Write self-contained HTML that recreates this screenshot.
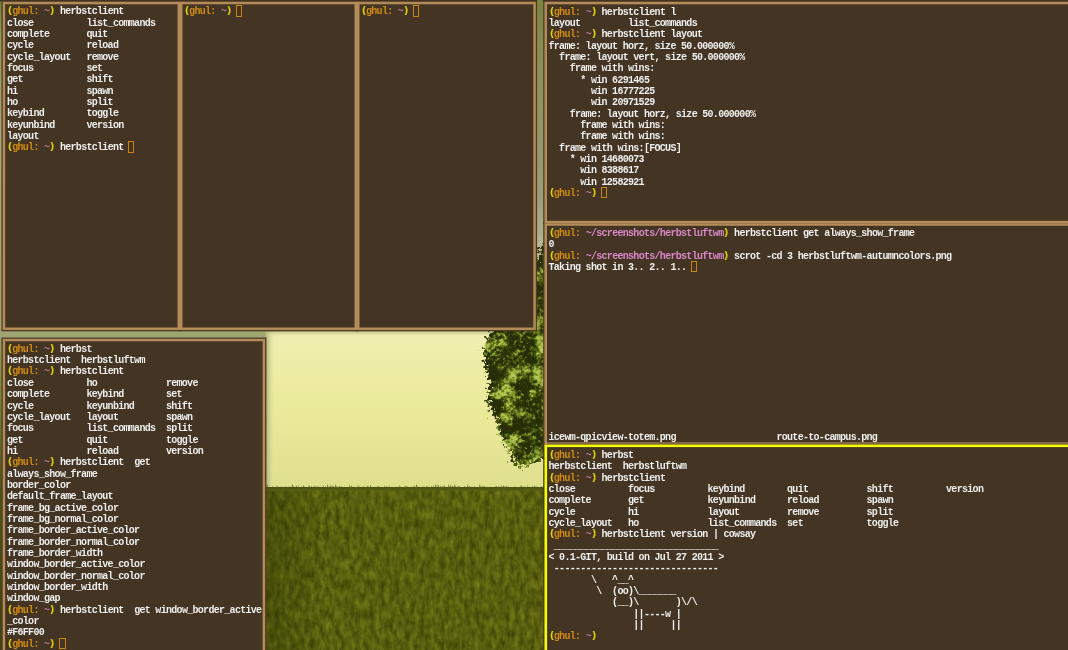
<!DOCTYPE html>
<html><head><meta charset="utf-8"><style>
html,body{margin:0;padding:0;width:1068px;height:650px;overflow:hidden;background:#433427}
svg{position:absolute;left:0;top:0}
.t{position:absolute;white-space:pre;filter:blur(0.2px);font-family:"Liberation Mono",monospace;font-weight:bold;font-size:10.00px;line-height:11px;color:#eeeeec;letter-spacing:-0.70px}
.cur{position:absolute;width:4.6px;height:9.2px;border:1.2px solid #cc8610}
.clip{position:absolute;overflow:hidden}
.pa{display:inline-block;transform:scale(0.95,0.82);transform-origin:50% 3.8px;-webkit-text-stroke:0.2px #e8d800}
</style></head><body>
<svg width="1068" height="650" viewBox="0 0 1068 650"><defs>
<linearGradient id="lstrip" x1="0" y1="0" x2="0" y2="650" gradientUnits="userSpaceOnUse">
 <stop offset="0" stop-color="#6e8236"/><stop offset="0.05" stop-color="#8c9a5a"/><stop offset="0.2" stop-color="#a5a878"/><stop offset="0.5" stop-color="#a0a470"/><stop offset="0.6" stop-color="#7a8a3a"/><stop offset="0.75" stop-color="#4a5818"/><stop offset="1" stop-color="#3a4410"/></linearGradient>
<linearGradient id="grassL" x1="0" y1="0" x2="1" y2="0">
 <stop offset="0" stop-color="#2a3000" stop-opacity="0.35"/><stop offset="1" stop-color="#2a3000" stop-opacity="0"/></linearGradient>
<linearGradient id="sky" x1="0" y1="0" x2="0" y2="1">
 <stop offset="0" stop-color="#f1efb2"/><stop offset="0.45" stop-color="#ebeb9c"/><stop offset="1" stop-color="#dfe08e"/></linearGradient>
<linearGradient id="skyshadeL" x1="0" y1="0" x2="1" y2="0">
 <stop offset="0" stop-color="#9ea573" stop-opacity="1"/><stop offset="1" stop-color="#e8e8a4" stop-opacity="0"/></linearGradient>
<linearGradient id="skyshadeT" x1="0" y1="0" x2="0" y2="1">
 <stop offset="0" stop-color="#9ea573" stop-opacity="1"/><stop offset="1" stop-color="#e8e8a4" stop-opacity="0"/></linearGradient>
<linearGradient id="grass" x1="0" y1="0" x2="0" y2="1">
 <stop offset="0" stop-color="#4a5410"/><stop offset="0.06" stop-color="#5a6218"/><stop offset="1" stop-color="#525c14"/></linearGradient>
<linearGradient id="strip" x1="0" y1="0" x2="0" y2="650" gradientUnits="userSpaceOnUse">
 <stop offset="0" stop-color="#7a8440"/><stop offset="0.1" stop-color="#8a9058"/><stop offset="0.3" stop-color="#9b9c78"/><stop offset="0.36" stop-color="#aeae8c"/>
 <stop offset="0.385" stop-color="#c0c0a0"/><stop offset="0.5" stop-color="#d8d8a0"/><stop offset="0.745" stop-color="#dfe08e"/>
 <stop offset="0.75" stop-color="#4c5a18"/><stop offset="1" stop-color="#4c5818"/></linearGradient>
<filter id="noise" color-interpolation-filters="sRGB" x="0" y="0" width="100%" height="100%"><feTurbulence type="fractalNoise" baseFrequency="0.2 0.1" numOctaves="5" seed="3"/>
 <feColorMatrix type="matrix" values="0.3 0 0 0 0.195  0.3 0 0 0 0.22  0.1 0 0 0 0.005  0 0 0 0 1"/></filter>
<filter id="leaf" color-interpolation-filters="sRGB" x="-10%" y="-10%" width="120%" height="120%">
 <feTurbulence type="fractalNoise" baseFrequency="0.06" numOctaves="2" seed="5" result="t1"/>
 <feTurbulence type="fractalNoise" baseFrequency="0.3" numOctaves="3" seed="11" result="t2"/>
 <feComposite in="t1" in2="t2" operator="arithmetic" k1="0" k2="0.75" k3="0.5" k4="-0.125" result="n0"/>
 <feColorMatrix in="n0" type="matrix" values="2.8 0 0 0 -0.72  2.8 0 0 0 -0.72  2.8 0 0 0 -0.72  0 0 0 0 1" result="n"/>
 <feComponentTransfer in="n" result="c0">
  <feFuncR type="table" tableValues="0.15 0.19 0.29 0.43 0.58 0.7"/>
  <feFuncG type="table" tableValues="0.18 0.22 0.34 0.5 0.66 0.78"/>
  <feFuncB type="table" tableValues="0.03 0.04 0.06 0.12 0.22 0.34"/>
 </feComponentTransfer>
 <feGaussianBlur in="c0" stdDeviation="0.45" result="c"/>
 <feGaussianBlur in="SourceAlpha" stdDeviation="4" result="b"/>
 <feColorMatrix in="t2" type="matrix" values="0 0 0 0 0  0 0 0 0 0  0 0 0 0 0  0 1 0 0 0" result="ta"/>
 <feComposite in="b" in2="ta" operator="arithmetic" k1="0" k2="1.2" k3="1.5" k4="-1.0" result="m"/>
 <feComponentTransfer in="m" result="m2"><feFuncA type="linear" slope="6" intercept="-1.5"/></feComponentTransfer>
 <feComposite in="c" in2="m2" operator="in"/></filter>
</defs><rect x="0" y="0" width="1068" height="650" fill="#8c9460"/><rect x="0" y="0" width="6" height="650" fill="url(#lstrip)"/><rect x="535" y="0" width="10" height="650" fill="url(#strip)"/><rect x="0" y="330" width="270" height="9" fill="#9ea573"/><rect x="265" y="330" width="280" height="158" fill="url(#sky)"/><rect x="265" y="330" width="10" height="158" fill="url(#skyshadeL)"/><rect x="265" y="330" width="280" height="7" fill="url(#skyshadeT)"/><rect x="265" y="487" width="280" height="163" fill="#000" filter="url(#noise)"/><rect x="265" y="487" width="60" height="163" fill="url(#grassL)"/><polygon points="265,491 265.6,486.5 266.7,487.8 267.3,484.0 268.7,487.8 269.3,486.5 270.0,487.8 270.6,487.0 271.9,487.8 272.5,486.0 274.6,487.8 275.2,487.0 276.2,487.8 276.8,485.0 278.0,487.8 278.6,486.5 280.7,487.8 281.3,486.0 282.3,487.8 282.9,487.0 285.0,487.8 285.6,486.0 287.6,487.8 288.2,486.5 289.1,487.8 289.7,486.0 291.5,487.8 292.1,484.0 294.4,487.8 295.0,486.0 295.8,487.8 296.4,485.0 297.6,487.8 298.2,485.5 299.7,487.8 300.3,486.5 301.3,487.8 301.9,486.0 302.7,487.8 303.3,485.0 305.4,487.8 306.0,487.0 308.2,487.8 308.8,485.0 310.7,487.8 311.3,486.0 313.4,487.8 314.0,485.0 315.0,487.8 315.6,485.5 317.2,487.8 317.8,485.5 319.3,487.8 319.9,486.5 321.0,487.8 321.6,487.0 322.4,487.8 323.0,485.5 324.7,487.8 325.3,486.0 326.8,487.8 327.4,484.0 328.9,487.8 329.5,486.0 330.3,487.8 330.9,484.0 331.9,487.8 332.5,485.5 334.7,487.8 335.3,484.0 337.1,487.8 337.7,486.0 338.6,487.8 339.2,485.5 341.1,487.8 341.7,486.0 343.5,487.8 344.1,486.5 346.3,487.8 346.9,487.0 349.0,487.8 349.6,484.0 350.6,487.8 351.2,485.0 352.9,487.8 353.5,486.5 354.4,487.8 355.0,486.5 356.1,487.8 356.7,487.0 357.4,487.8 358.0,484.0 358.7,487.8 359.3,486.0 361.2,487.8 361.8,486.0 362.5,487.8 363.1,486.0 364.2,487.8 364.8,486.5 366.8,487.8 367.4,485.5 369.6,487.8 370.2,485.0 372.0,487.8 372.6,487.0 373.7,487.8 374.3,486.5 376.5,487.8 377.1,486.0 378.0,487.8 378.6,485.5 380.3,487.8 380.9,486.5 382.1,487.8 382.7,487.0 383.9,487.8 384.5,485.5 385.4,487.8 386.0,486.0 388.4,487.8 389.0,485.0 389.8,487.8 390.4,486.5 391.8,487.8 392.4,486.5 393.2,487.8 393.8,487.0 394.5,487.8 395.1,486.5 396.7,487.8 397.3,486.5 399.0,487.8 399.6,485.0 401.1,487.8 401.7,486.5 402.9,487.8 403.5,487.0 404.3,487.8 404.9,485.0 406.0,487.8 406.6,485.5 408.4,487.8 409.0,486.5 410.5,487.8 411.1,486.5 412.5,487.8 413.1,485.5 413.7,487.8 414.3,485.5 415.7,487.8 416.3,484.0 418.5,487.8 419.1,486.5 420.6,487.8 421.2,487.0 421.9,487.8 422.5,486.0 423.5,487.8 424.1,486.5 426.1,487.8 426.7,485.5 428.9,487.8 429.5,486.5 430.7,487.8 431.3,486.0 432.9,487.8 433.5,485.0 434.8,487.8 435.4,484.0 437.2,487.8 437.8,484.0 439.7,487.8 440.3,485.5 441.6,487.8 442.2,485.5 443.2,487.8 443.8,485.0 446.0,487.8 446.6,486.5 447.8,487.8 448.4,484.0 449.9,487.8 450.5,484.0 451.6,487.8 452.2,485.5 453.8,487.8 454.4,484.0 456.4,487.8 457.0,486.0 458.2,487.8 458.8,485.5 461.2,487.8 461.8,487.0 463.9,487.8 464.5,486.0 466.8,487.8 467.4,484.0 468.4,487.8 469.0,485.5 471.2,487.8 471.8,486.5 473.8,487.8 474.4,486.0 476.2,487.8 476.8,487.0 479.0,487.8 479.6,484.0 481.3,487.8 481.9,485.0 483.3,487.8 483.9,485.5 486.2,487.8 486.8,486.5 488.9,487.8 489.5,486.5 491.7,487.8 492.3,487.0 494.0,487.8 494.6,486.0 495.4,487.8 496.0,485.5 498.2,487.8 498.8,485.0 499.5,487.8 500.1,486.5 501.0,487.8 501.6,485.0 502.8,487.8 503.4,485.0 505.4,487.8 506.0,485.5 508.2,487.8 508.8,485.5 509.5,487.8 510.1,487.0 511.9,487.8 512.5,487.0 514.0,487.8 514.6,486.0 516.3,487.8 516.9,486.5 517.6,487.8 518.2,487.0 520.2,487.8 520.8,485.0 523.0,487.8 523.6,486.0 525.7,487.8 526.3,487.0 527.0,487.8 527.6,485.0 529.1,487.8 529.7,486.5 531.7,487.8 532.3,486.0 533.6,487.8 534.2,485.5 536.3,487.8 536.9,485.5 537.7,487.8 538.3,487.0 540.5,487.8 541.1,486.0 542.7,487.8 543.3,485.5 544.6,487.8 545.2,484.0 547.2,487.8 545,491" fill="#5a6216" opacity="0.7"/><rect x="265" y="487" width="280" height="3" fill="#4a5210" opacity="0.5"/><path d="M560,241 L545,241 L540,249 L537,262 L535,280 L532,300 L524,316 L510,325 L495,329 L489,333 L486,340 L484,350 L484,362 L486,370 L489,378 L492,385 L485,392 L490,397 L487,404 L492,410 L496,418 L498,426 L500,433 L502,440 L507,447 L511,452 L513,458 L514,465 L521,468 L530,465 L538,460 L560,455 L560,240 Z" fill="#000" filter="url(#leaf)"/><rect x="0" y="0" width="537" height="1.4" fill="#3a2c1c"/><rect x="543" y="0" width="525" height="1.4" fill="#3a2c1c"/><rect x="1.40" y="0.50" width="179.90" height="330.80" fill="#4e3b26"/><rect x="178.70" y="0.50" width="179.60" height="330.80" fill="#4e3b26"/><rect x="355.70" y="0.50" width="181.40" height="330.80" fill="#4e3b26"/><rect x="1.40" y="337.50" width="265.00" height="363.80" fill="#4e3b26"/><rect x="543.20" y="0.50" width="558.10" height="224.10" fill="#4e3b26"/><rect x="543.20" y="222.00" width="558.10" height="223.80" fill="#4e3b26"/><rect x="543.20" y="443.20" width="558.10" height="258.10" fill="#4e3b26"/><rect x="2.70" y="1.80" width="177.30" height="328.20" fill="#b28b58"/><rect x="180.00" y="1.80" width="177.00" height="328.20" fill="#b28b58"/><rect x="357.00" y="1.80" width="178.80" height="328.20" fill="#b28b58"/><rect x="2.70" y="338.80" width="262.40" height="361.20" fill="#b28b58"/><rect x="544.50" y="1.80" width="555.50" height="221.50" fill="#b28b58"/><rect x="544.50" y="223.30" width="555.50" height="221.20" fill="#b28b58"/><rect x="544.50" y="444.50" width="555.50" height="255.50" fill="#f6ff00"/><rect x="5.20" y="4.30" width="172.30" height="323.20" fill="#443423"/><rect x="182.50" y="4.30" width="172.00" height="323.20" fill="#443423"/><rect x="359.50" y="4.30" width="173.80" height="323.20" fill="#443423"/><rect x="5.20" y="341.30" width="257.40" height="356.20" fill="#443423"/><rect x="547.00" y="4.30" width="550.50" height="216.50" fill="#443423"/><rect x="547.00" y="225.80" width="550.50" height="216.20" fill="#443423"/><rect x="547.10" y="447.10" width="550.30" height="250.30" fill="#443423"/><rect x="547" y="442.0" width="521" height="2.5" fill="#4e3b26" fill-opacity="0.45"/></svg>
<div class="t" style="left:6.90px;top:6.40px"><span class="pa" style="color:#e2d400">(</span><span style="color:#d08a12">ghul:</span> <span style="color:#b07898">~</span><span class="pa" style="color:#e2d400">)</span> herbstclient</div>
<div class="t" style="left:6.90px;top:17.74px">close          list_commands</div>
<div class="t" style="left:6.90px;top:29.08px">complete       quit</div>
<div class="t" style="left:6.90px;top:40.42px">cycle          reload</div>
<div class="t" style="left:6.90px;top:51.76px">cycle_layout   remove</div>
<div class="t" style="left:6.90px;top:63.10px">focus          set</div>
<div class="t" style="left:6.90px;top:74.44px">get            shift</div>
<div class="t" style="left:6.90px;top:85.78px">hi             spawn</div>
<div class="t" style="left:6.90px;top:97.12px">ho             split</div>
<div class="t" style="left:6.90px;top:108.46px">keybind        toggle</div>
<div class="t" style="left:6.90px;top:119.80px">keyunbind      version</div>
<div class="t" style="left:6.90px;top:131.14px">layout</div>
<div class="t" style="left:6.90px;top:142.48px"><span class="pa" style="color:#e2d400">(</span><span style="color:#d08a12">ghul:</span> <span style="color:#b07898">~</span><span class="pa" style="color:#e2d400">)</span> herbstclient </div>
<div class="cur" style="left:127.90px;top:141.48px"></div>
<div class="t" style="left:183.80px;top:6.40px"><span class="pa" style="color:#e2d400">(</span><span style="color:#d08a12">ghul:</span> <span style="color:#b07898">~</span><span class="pa" style="color:#e2d400">)</span> </div>
<div class="cur" style="left:235.90px;top:5.40px"></div>
<div class="t" style="left:360.70px;top:6.40px"><span class="pa" style="color:#e2d400">(</span><span style="color:#d08a12">ghul:</span> <span style="color:#b07898">~</span><span class="pa" style="color:#e2d400">)</span> </div>
<div class="cur" style="left:412.80px;top:5.40px"></div>
<div class="t" style="left:548.50px;top:6.50px"><span class="pa" style="color:#e2d400">(</span><span style="color:#d08a12">ghul:</span> <span style="color:#b07898">~</span><span class="pa" style="color:#e2d400">)</span> herbstclient l</div>
<div class="t" style="left:548.50px;top:17.84px">layout         list_commands</div>
<div class="t" style="left:548.50px;top:29.18px"><span class="pa" style="color:#e2d400">(</span><span style="color:#d08a12">ghul:</span> <span style="color:#b07898">~</span><span class="pa" style="color:#e2d400">)</span> herbstclient layout</div>
<div class="t" style="left:548.50px;top:40.52px">frame: layout horz, size 50.000000%</div>
<div class="t" style="left:548.50px;top:51.86px">  frame: layout vert, size 50.000000%</div>
<div class="t" style="left:548.50px;top:63.20px">    frame with wins:</div>
<div class="t" style="left:548.50px;top:74.54px">      * win 6291465</div>
<div class="t" style="left:548.50px;top:85.88px">        win 16777225</div>
<div class="t" style="left:548.50px;top:97.22px">        win 20971529</div>
<div class="t" style="left:548.50px;top:108.56px">    frame: layout horz, size 50.000000%</div>
<div class="t" style="left:548.50px;top:119.90px">      frame with wins:</div>
<div class="t" style="left:548.50px;top:131.24px">      frame with wins:</div>
<div class="t" style="left:548.50px;top:142.58px">  frame with wins:[FOCUS]</div>
<div class="t" style="left:548.50px;top:153.92px">    * win 14680073</div>
<div class="t" style="left:548.50px;top:165.26px">      win 8388617</div>
<div class="t" style="left:548.50px;top:176.60px">      win 12582921</div>
<div class="t" style="left:548.50px;top:187.94px"><span class="pa" style="color:#e2d400">(</span><span style="color:#d08a12">ghul:</span> <span style="color:#b07898">~</span><span class="pa" style="color:#e2d400">)</span> </div>
<div class="cur" style="left:600.60px;top:186.94px"></div>
<div class="clip" style="left:547px;top:225.8px;width:521px;height:216.5px"><div style="position:absolute;left:-547px;top:-225.8px"><div class="t" style="left:548.50px;top:227.90px"><span class="pa" style="color:#e2d400">(</span><span style="color:#d08a12">ghul:</span> <span style="color:#d888c8">~/screenshots/herbstluftwm</span><span class="pa" style="color:#e2d400">)</span> herbstclient get always_show_frame</div>
<div class="t" style="left:548.50px;top:239.24px">0</div>
<div class="t" style="left:548.50px;top:250.58px"><span class="pa" style="color:#e2d400">(</span><span style="color:#d08a12">ghul:</span> <span style="color:#d888c8">~/screenshots/herbstluftwm</span><span class="pa" style="color:#e2d400">)</span> scrot -cd 3 herbstluftwm-autumncolors.png</div>
<div class="t" style="left:548.50px;top:261.92px">Taking shot in 3.. 2.. 1.. </div><div class="cur" style="left:690.70px;top:260.92px"></div><div class="t" style="left:548.50px;top:432.02px">icewm-qpicview-totem.png                   route-to-campus.png</div></div></div>
<div class="t" style="left:6.90px;top:343.80px"><span class="pa" style="color:#e2d400">(</span><span style="color:#d08a12">ghul:</span> <span style="color:#b07898">~</span><span class="pa" style="color:#e2d400">)</span> herbst</div>
<div class="t" style="left:6.90px;top:355.14px">herbstclient  herbstluftwm</div>
<div class="t" style="left:6.90px;top:366.48px"><span class="pa" style="color:#e2d400">(</span><span style="color:#d08a12">ghul:</span> <span style="color:#b07898">~</span><span class="pa" style="color:#e2d400">)</span> herbstclient</div>
<div class="t" style="left:6.90px;top:377.82px">close          ho             remove</div>
<div class="t" style="left:6.90px;top:389.16px">complete       keybind        set</div>
<div class="t" style="left:6.90px;top:400.50px">cycle          keyunbind      shift</div>
<div class="t" style="left:6.90px;top:411.84px">cycle_layout   layout         spawn</div>
<div class="t" style="left:6.90px;top:423.18px">focus          list_commands  split</div>
<div class="t" style="left:6.90px;top:434.52px">get            quit           toggle</div>
<div class="t" style="left:6.90px;top:445.86px">hi             reload         version</div>
<div class="t" style="left:6.90px;top:457.20px"><span class="pa" style="color:#e2d400">(</span><span style="color:#d08a12">ghul:</span> <span style="color:#b07898">~</span><span class="pa" style="color:#e2d400">)</span> herbstclient  get</div>
<div class="t" style="left:6.90px;top:468.54px">always_show_frame</div>
<div class="t" style="left:6.90px;top:479.88px">border_color</div>
<div class="t" style="left:6.90px;top:491.22px">default_frame_layout</div>
<div class="t" style="left:6.90px;top:502.56px">frame_bg_active_color</div>
<div class="t" style="left:6.90px;top:513.90px">frame_bg_normal_color</div>
<div class="t" style="left:6.90px;top:525.24px">frame_border_active_color</div>
<div class="t" style="left:6.90px;top:536.58px">frame_border_normal_color</div>
<div class="t" style="left:6.90px;top:547.92px">frame_border_width</div>
<div class="t" style="left:6.90px;top:559.26px">window_border_active_color</div>
<div class="t" style="left:6.90px;top:570.60px">window_border_normal_color</div>
<div class="t" style="left:6.90px;top:581.94px">window_border_width</div>
<div class="t" style="left:6.90px;top:593.28px">window_gap</div>
<div class="t" style="left:6.90px;top:604.62px"><span class="pa" style="color:#e2d400">(</span><span style="color:#d08a12">ghul:</span> <span style="color:#b07898">~</span><span class="pa" style="color:#e2d400">)</span> herbstclient  get window_border_active</div>
<div class="t" style="left:6.90px;top:615.96px">_color</div>
<div class="t" style="left:6.90px;top:627.30px">#F6FF00</div>
<div class="t" style="left:6.90px;top:638.64px"><span class="pa" style="color:#e2d400">(</span><span style="color:#d08a12">ghul:</span> <span style="color:#b07898">~</span><span class="pa" style="color:#e2d400">)</span> </div>
<div class="cur" style="left:59.00px;top:637.64px"></div>
<div class="t" style="left:548.50px;top:450.00px"><span class="pa" style="color:#e2d400">(</span><span style="color:#d08a12">ghul:</span> <span style="color:#b07898">~</span><span class="pa" style="color:#e2d400">)</span> herbst</div>
<div class="t" style="left:548.50px;top:461.34px">herbstclient  herbstluftwm</div>
<div class="t" style="left:548.50px;top:472.68px"><span class="pa" style="color:#e2d400">(</span><span style="color:#d08a12">ghul:</span> <span style="color:#b07898">~</span><span class="pa" style="color:#e2d400">)</span> herbstclient</div>
<div class="t" style="left:548.50px;top:484.02px">close          focus          keybind        quit           shift          version</div>
<div class="t" style="left:548.50px;top:495.36px">complete       get            keyunbind      reload         spawn</div>
<div class="t" style="left:548.50px;top:506.70px">cycle          hi             layout         remove         split</div>
<div class="t" style="left:548.50px;top:518.04px">cycle_layout   ho             list_commands  set            toggle</div>
<div class="t" style="left:548.50px;top:529.38px"><span class="pa" style="color:#e2d400">(</span><span style="color:#d08a12">ghul:</span> <span style="color:#b07898">~</span><span class="pa" style="color:#e2d400">)</span> herbstclient version | cowsay</div>
<div class="t" style="left:548.50px;top:540.72px"> _______________________________</div>
<div class="t" style="left:548.50px;top:552.06px">&lt; 0.1-GIT, build on Jul 27 2011 &gt;</div>
<div class="t" style="left:548.50px;top:563.40px"> -------------------------------</div>
<div class="t" style="left:548.50px;top:574.74px">        \   ^__^</div>
<div class="t" style="left:548.50px;top:586.08px">         \  (oo)\_______</div>
<div class="t" style="left:548.50px;top:597.42px">            (__)\       )\/\</div>
<div class="t" style="left:548.50px;top:608.76px">                ||----w |</div>
<div class="t" style="left:548.50px;top:620.10px">                ||     ||</div>
<div class="t" style="left:548.50px;top:631.44px"><span class="pa" style="color:#e2d400">(</span><span style="color:#d08a12">ghul:</span> <span style="color:#b07898">~</span><span class="pa" style="color:#e2d400">)</span></div>
</body></html>
